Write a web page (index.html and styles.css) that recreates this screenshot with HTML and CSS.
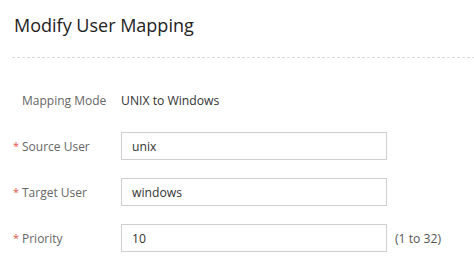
FILE: index.html
```html
<!DOCTYPE html>
<html>
<head>
<meta charset="utf-8">
<link rel="stylesheet" href="styles.css">
</head>
<body>
<div class="dialog">
  <h1 class="title">Modify User Mapping</h1>
  <div class="divider"></div>
  <div class="form">
    <div class="row">
      <div class="label">Mapping Mode</div>
      <div class="value">UNIX to Windows</div>
    </div>
    <div class="row">
      <div class="label"><span class="req">*</span>Source User</div>
      <div class="input">unix</div>
    </div>
    <div class="row">
      <div class="label"><span class="req">*</span>Target User</div>
      <div class="input">windows</div>
    </div>
    <div class="row">
      <div class="label"><span class="req">*</span>Priority</div>
      <div class="input">10</div>
      <div class="hint">(1 to 32)</div>
    </div>
  </div>
</div>
</body>
</html>
```
FILE: styles.css
```css
html, body {
  margin: 0;
  padding: 0;
  background: #fff;
}
.dialog {
  font-family: "Open Sans", "Noto Sans", sans-serif;
  padding: 13px 0 0 12px;
}
.title {
  margin: 0 0 0 2px;
  font-size: 18px;
  font-weight: 500;
  line-height: 24px;
  color: #222;
}
.divider {
  margin-top: 20px;
  height: 1px;
  background: repeating-linear-gradient(to right, #dcdcdc 0 3px, transparent 3px 5px);
}
.form {
  display: flex;
  flex-direction: column;
  gap: 18px;
  margin-top: 28px;
}
.row {
  display: flex;
  align-items: center;
  height: 28px;
}
.label {
  width: 109px;
  font-size: 12px;
  color: #666;
  position: relative;
  padding-left: 10px;
  box-sizing: border-box;
}
.req {
  position: absolute;
  left: 1px;
  top: 0;
  color: #e5534b;
  font-size: 11px;
}
.value {
  font-size: 12.2px;
  color: #333;
}
.input {
  width: 266px;
  height: 28px;
  box-sizing: border-box;
  border: 1px solid #cfcfcf;
  padding: 0 10px;
  display: flex;
  align-items: center;
  font-size: 12.2px;
  color: #333;
}
.hint {
  margin-left: 8px;
  font-size: 12.2px;
  color: #555;
}
```
